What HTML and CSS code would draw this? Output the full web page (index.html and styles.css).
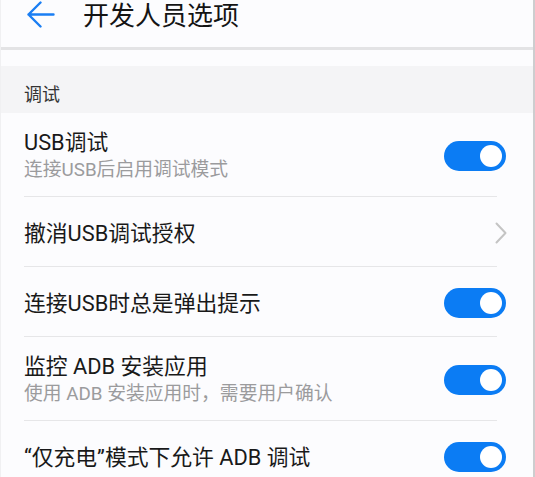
FILE: index.html
```html
<!DOCTYPE html>
<html lang="zh-CN">
<head>
<meta charset="utf-8">
<title>开发人员选项</title>
<link rel="stylesheet" href="styles.css">
</head>
<body>
<div class="screen">
  <header class="appbar">
    <svg class="back" width="28" height="28" viewBox="0 0 28 28" aria-hidden="true">
      <path d="M1.5 13.5 H26.5 M13.5 1.5 L1.5 13.5 L13.5 25.5" fill="none" stroke="#1a7ef3" stroke-width="2.4" stroke-linecap="round" stroke-linejoin="round"/>
    </svg>
    <h1 class="title">开发人员选项</h1>
  </header>
  <div class="appbar-rule"></div>

  <section class="group">
    <div class="group-label">调试</div>
  </section>

  <div class="list">
    <div class="row">
      <div class="texts">
        <div class="row-title">USB调试</div>
        <div class="row-sub">连接USB后启用调试模式</div>
      </div>
      <span class="switch on"><span class="knob"></span></span>
    </div>
    <div class="divider"></div>

    <div class="row">
      <div class="texts">
        <div class="row-title">撤消USB调试授权</div>
      </div>
      <svg class="chevron" width="12" height="22" viewBox="0 0 12 22" aria-hidden="true">
        <path d="M1.5 1.5 L10.5 11 L1.5 20.5" fill="none" stroke="#c4c4c4" stroke-width="2" stroke-linecap="round" stroke-linejoin="round"/>
      </svg>
    </div>
    <div class="divider"></div>

    <div class="row">
      <div class="texts">
        <div class="row-title">连接USB时总是弹出提示</div>
      </div>
      <span class="switch on"><span class="knob"></span></span>
    </div>
    <div class="divider"></div>

    <div class="row">
      <div class="texts">
        <div class="row-title">监控 ADB 安装应用</div>
        <div class="row-sub">使用 ADB 安装应用时，需要用户确认</div>
      </div>
      <span class="switch on"><span class="knob"></span></span>
    </div>
    <div class="divider"></div>

    <div class="row">
      <div class="texts">
        <div class="row-title">“仅充电”模式下允许 ADB 调试</div>
      </div>
      <span class="switch on"><span class="knob"></span></span>
    </div>
  </div>
</div>
</body>
</html>
```

FILE: styles.css
```css
html, body {
  margin: 0;
  padding: 0;
  background: #fcfcfe;
}

body {
  font-family: "Roboto", "Noto Sans CJK SC", "Noto Sans", sans-serif;
  color: #1a1a1a;
  overflow: hidden;
}

.screen {
  box-sizing: border-box;
  width: 100%;
  min-height: 477px;
  border-right: 2px solid #cdcdcf;
  border-left: 1px solid #f0f0f2;
}

/* top app bar */
.appbar {
  box-sizing: border-box;
  display: flex;
  align-items: flex-start;
  height: 47px;
  padding-left: 26px;
}

.back {
  flex: none;
  margin-top: 1px;
}

.title {
  margin: 0 0 0 28px;
  font-size: 26px;
  font-weight: 400;
  line-height: 32px;
  color: #141414;
}

.appbar-rule {
  height: 3px;
  background: #e3e3e5;
  margin-bottom: 16px;
}

/* section header */
.group {
  background: #f4f4f6;
  height: 47px;
  box-sizing: border-box;
  padding: 17px 0 0 23px;
}

.group-label {
  font-size: 18px;
  line-height: 24px;
  color: #333;
}

/* rows */
.row {
  box-sizing: border-box;
  display: flex;
  align-items: center;
  min-height: 69px;
  padding: 15px 27px 12px 23px;
}

.texts {
  flex: 1;
  min-width: 0;
}

.row-title {
  font-size: 21.8px;
  line-height: 29px;
  color: #191919;
}

.row-sub {
  font-size: 18.8px;
  line-height: 27px;
  color: #9b9b9d;
}

.divider {
  height: 1px;
  background: #e6e6e8;
  margin: 0 36px 0 23px;
}

.chevron {
  flex: none;
  margin-right: -1px;
}

/* switch */
.switch {
  flex: none;
  position: relative;
  width: 62px;
  height: 30px;
  border-radius: 15px;
  background: #0b7cf4;
}

.switch .knob {
  position: absolute;
  top: 4px;
  right: 4px;
  width: 22px;
  height: 22px;
  border-radius: 50%;
  background: #fff;
}
```
